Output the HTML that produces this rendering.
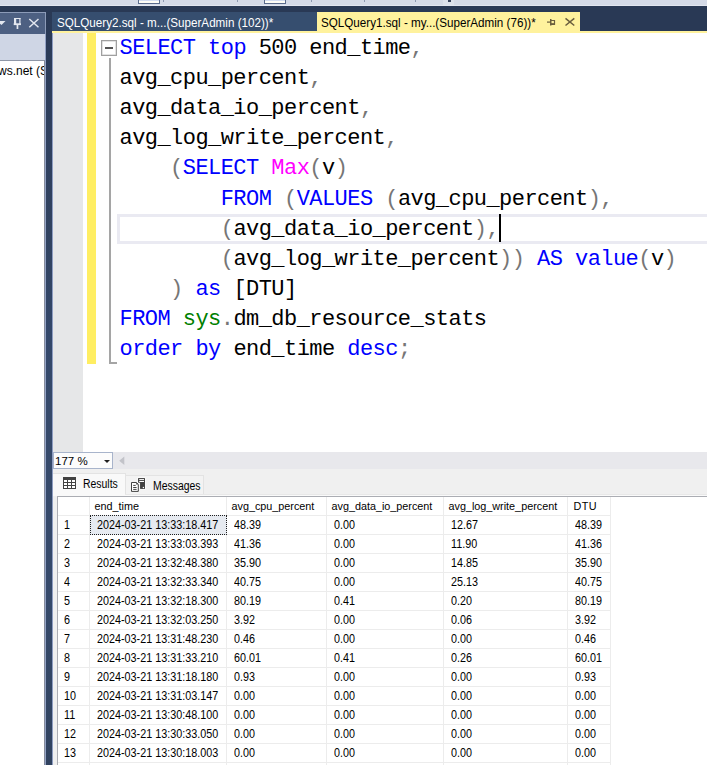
<!DOCTYPE html>
<html><head><meta charset="utf-8">
<style>
*{margin:0;padding:0;box-sizing:border-box}
html,body{width:707px;height:765px;overflow:hidden;background:#293955;position:relative;font-family:"Liberation Sans",sans-serif}
.a{position:absolute}
svg{position:absolute;overflow:visible}
#topbar{left:0;top:0;width:707px;height:5px;background:#D4DAE7}
#topline{left:0;top:5px;width:707px;height:1px;background:#E2E6F0}
.tb{position:absolute;top:0;height:4px;background:linear-gradient(#D3DCEF 0,#D3DCEF 1px,#FEFDF6 1px);border:1px solid #5A6B8C;border-top:none}
.tk{position:absolute;top:0;width:1px;height:2px;background:#8E9AB2}
#tw-title{left:0;top:12px;width:46px;height:22px;background:#4D6082;border-top:1px solid #8C9BB8;border-right:1px solid #8C9BB8}
#tw-tool{left:0;top:34px;width:46px;height:26px;background:#CFD6E5}
#tw-body{left:0;top:60px;width:45px;height:705px;background:#fff;border-top:1px solid #8E96A6;border-right:1px solid #868C9A}
#tw-edge{left:45px;top:34px;width:1px;height:731px;background:#94A3C6}
#vstrip{left:46px;top:6px;width:6px;height:759px;background:linear-gradient(to bottom,#293955 0px,#2F405F 140px,#304260 230px,#33476A 330px,#35496A 394px,#35496A 594px,#30425F 759px)}
#tw-text{left:0;top:61px;width:44px;height:20px;overflow:hidden;white-space:nowrap;font-size:12px;line-height:20px;color:#000}
#tab2{left:52px;top:12px;width:265px;height:19px;background:#364E6F}
#tab2 span,#tab1 span{position:absolute;left:5px;top:1.6px;font-size:12.6px;line-height:19px;white-space:nowrap;transform:scaleX(0.925);transform-origin:0 0}
#tab2 span{color:#fff}
#tab1{left:317px;top:12px;width:263px;height:19px;background:#FFF29D}
#tab1 span{left:4px;color:#000}
#tabline{left:52px;top:31px;width:655px;height:2px;background:#FFF29D}
#edge52{left:52px;top:33px;width:1px;height:732px;background:#8E9DC1}
#editor{left:53px;top:33px;width:654px;height:419px;background:#fff}
#margin{left:53px;top:33px;width:30px;height:419px;background:#E6E7E8}
#ybar{left:87px;top:33px;width:9px;height:331px;background:#FFEE62}
.cl{left:119.5px;font-family:"Liberation Mono",monospace;font-size:22px;line-height:30px;height:30px;letter-spacing:-0.55px;white-space:pre;color:#000}
.k{color:#0000FF}.g{color:#767676}.m{color:#FF00FF}.s{color:#008000}
#curline{left:117px;top:214px;width:600px;height:30px;border:3px solid #EAEAF2;border-right:none}
#caret{left:499px;top:214px;width:2px;height:28px;background:#000}
#obox{left:101px;top:40px;width:16px;height:16px;border:1px solid #A0A0A0;box-shadow:inset 0 0 0 0.5px #C8C8C8;background:#fff}
#obox i{position:absolute;left:3px;top:6px;width:8px;height:2px;background:#555}
#oline{left:109px;top:58px;width:2px;height:305px;background:#A5A5A5}
#otick{left:109px;top:362px;width:8px;height:2px;background:#A5A5A5}
#zbar{left:53px;top:452px;width:654px;height:17px;background:#E8E8EC}
#zcombo{left:53px;top:452px;width:60px;height:17px;background:#FCFCFC;border:1px solid #A8B4CB;font-size:11.5px;line-height:17px;padding-left:1px;color:#000}
#results{left:53px;top:469px;width:654px;height:296px;background:#F0F0F0}
#rtab{left:53px;top:473px;width:73px;height:23px;background:#F9F9F9;border:1px solid #E3E3E3;border-bottom:none;border-left:none}
#mtab{left:125px;top:475px;width:79px;height:21px;background:#F3F3F3;border:1px solid #E3E3E3;border-bottom:none}
.tabt{position:absolute;font-size:12px;line-height:14px;color:#000;white-space:nowrap;transform:scaleX(0.87);transform-origin:0 0}
#grid{left:57px;top:496px;width:650px;height:269px;background:#fff;border-top:1px solid #ABADB3;border-left:1px solid #ABADB3}
#tabbase{left:125px;top:494px;width:582px;height:2px;background:linear-gradient(#E8E8E8 0,#E8E8E8 1px,#FAFAFA 1px)}
.vl{position:absolute;top:497px;width:1px;height:268px;background:#ECECEC}
.hl{position:absolute;left:58px;width:553px;height:1px;background:#ECECEC}
.gt{position:absolute;font-size:10.8px;line-height:14px;white-space:nowrap;color:#000}
.gd{transform:scaleY(1.13);transform-origin:0 11px}
#sel{left:90px;top:515px;width:137px;height:20px;background:#E6EAF0;border:1px dotted #202020}
</style></head><body>
<div class="a" id="topbar"></div><div class="a" id="topline"></div>
<div class="tb" style="left:138px;width:22px"></div><div class="tb" style="left:264px;width:22px"></div><div class="tk" style="left:163px"></div><div class="tk" style="left:237px"></div><div class="tk" style="left:311px"></div><div class="tk" style="left:364px"></div><div class="tk" style="left:415px"></div><div class="a" style="left:443px;top:0;width:11px;height:5px;background:#DDE2EC"></div><div class="a" style="left:448px;top:0;width:3px;height:2px;background:#3A4660"></div>
<div class="a" id="vstrip"></div><div class="a" id="tw-title"></div><div class="a" id="tw-tool"></div><div class="a" id="tw-body"></div><div class="a" id="tw-edge"></div>
<div class="a" id="tw-text"><span style="position:relative;left:-2px">ws.net (SuperAdmin)</span></div>
<svg width="46" height="22" style="left:0;top:12px" viewBox="0 0 46 22"><path d="M-3 9 L5.5 9 L1.5 13 Z" fill="#E3E7EF"/><rect x="14" y="6" width="2.2" height="6" fill="#E3E7EF"/><rect x="19.3" y="6" width="1.2" height="6" fill="#E3E7EF"/><rect x="14" y="6" width="6.5" height="1" fill="#E3E7EF"/><rect x="13.7" y="11.3" width="7.3" height="1.8" fill="#E3E7EF"/><rect x="16.6" y="13" width="1.7" height="4" fill="#E3E7EF"/><path d="M29.3 7 L38.5 15.3 M38.5 7 L29.3 15.3" stroke="#E3E7EF" stroke-width="1.5"/></svg>
<div class="a" id="tab2"><span>SQLQuery2.sql - m...(SuperAdmin (102))*</span></div>
<div class="a" id="tab1"><span>SQLQuery1.sql - my...(SuperAdmin (76))*</span></div>
<svg width="40" height="19" style="left:540px;top:12px" viewBox="0 0 40 19"><rect x="7" y="9.5" width="4" height="1.2" fill="#6B5F3E"/><rect x="10" y="7" width="1.5" height="6.5" fill="#6B5F3E"/><path d="M11 8.5 H14.5 V12.3 H11" stroke="#6B5F3E" stroke-width="1.2" fill="none"/><rect x="11" y="11.2" width="4" height="1.8" fill="#6B5F3E"/><path d="M25.5 6.3 L34.3 13.5 M34.3 6.3 L25.5 13.5" stroke="#6B5F3E" stroke-width="1.5"/></svg>
<div class="a" id="tabline"></div>
<div class="a" id="edge52"></div><div class="a" id="editor"></div><div class="a" id="margin"></div><div class="a" id="ybar"></div>
<div class="a" id="curline"></div><div class="a" id="obox"><i></i></div><div class="a" id="oline"></div><div class="a" id="otick"></div>
<div class="a cl" style="top:34.0px"><span class="k">SELECT</span> <span class="k">top</span> 500 end_time<span class="g">,</span></div>
<div class="a cl" style="top:64.1px">avg_cpu_percent<span class="g">,</span></div>
<div class="a cl" style="top:94.2px">avg_data_io_percent<span class="g">,</span></div>
<div class="a cl" style="top:124.3px">avg_log_write_percent<span class="g">,</span></div>
<div class="a cl" style="top:154.4px">    <span class="g">(</span><span class="k">SELECT</span> <span class="m">Max</span><span class="g">(</span>v<span class="g">)</span></div>
<div class="a cl" style="top:184.5px">        <span class="k">FROM</span> <span class="g">(</span><span class="k">VALUES</span> <span class="g">(</span>avg_cpu_percent<span class="g">),</span></div>
<div class="a cl" style="top:214.6px">        <span class="g">(</span>avg_data_io_percent<span class="g">),</span></div>
<div class="a cl" style="top:244.7px">        <span class="g">(</span>avg_log_write_percent<span class="g">))</span> <span class="k">AS</span> <span class="k">value</span><span class="g">(</span>v<span class="g">)</span></div>
<div class="a cl" style="top:274.8px">    <span class="g">)</span> <span class="k">as</span> [DTU]</div>
<div class="a cl" style="top:304.9px"><span class="k">FROM</span> <span class="s">sys</span><span class="g">.</span>dm_db_resource_stats</div>
<div class="a cl" style="top:335.0px"><span class="k">order</span> <span class="k">by</span> end_time <span class="k">desc</span><span class="g">;</span></div>
<div class="a" id="caret"></div>
<div class="a" id="zbar"></div><div class="a" id="zcombo">177 %</div>
<svg width="30" height="17" style="left:100px;top:452px" viewBox="0 0 30 17"><path d="M4 8 H10 L7 11 Z" fill="#1E1E1E"/><path d="M24.3 4.5 V13 L19.2 8.7 Z" fill="#C2C3C9"/></svg>
<div class="a" id="results"></div><div class="a" id="rtab"></div><div class="a" id="mtab"></div>
<svg width="14" height="13" style="left:63px;top:477px" viewBox="0 0 14 13"><rect x="0" y="0" width="13" height="12" fill="#424242"/><rect x="1" y="3" width="3" height="2" fill="#fff"/><rect x="5" y="3" width="3" height="2" fill="#fff"/><rect x="9" y="3" width="3" height="2" fill="#fff"/><rect x="1" y="6" width="3" height="2" fill="#fff"/><rect x="5" y="6" width="3" height="2" fill="#fff"/><rect x="9" y="6" width="3" height="2" fill="#fff"/><rect x="1" y="9" width="3" height="2" fill="#fff"/><rect x="5" y="9" width="3" height="2" fill="#fff"/><rect x="9" y="9" width="3" height="2" fill="#fff"/></svg>
<div class="tabt" style="left:83px;top:477px">Results</div>
<svg width="16" height="16" style="left:130px;top:477px" viewBox="0 0 16 16"><path d="M1.5 5.5 H6.4 L8.3 7.4 V14.4 H1.5 Z" fill="#fff" stroke="#424242" stroke-width="1"/><path d="M6.2 5.5 V7.5 H8.3 Z" fill="#424242"/><path d="M3.2 8.4 H5.7 M3.2 10.5 H6.6 M3.2 12.4 H6.6" stroke="#424242" stroke-width="1"/><path d="M8.2 1.2 H14.9 V11.7 H10.2 V5.4 H8.2 Z" fill="#424242" stroke="#fff" stroke-width="1.4" paint-order="stroke"/><path d="M8.2 1.2 H14.9 V11.7 H10.2 V5.4 H8.2 Z" fill="#424242"/><rect x="9.2" y="2.1" width="4.8" height="1" fill="#fff"/><rect x="9.2" y="4.0" width="4.8" height="1" fill="#fff"/><circle cx="13.4" cy="10.5" r="0.7" fill="#fff"/></svg>
<div class="tabt" style="left:152.5px;top:479px">Messages</div>
<div class="a" id="tabbase"></div><div class="a" id="grid"></div>
<div class="vl" style="left:89px"></div>
<div class="vl" style="left:226px"></div>
<div class="vl" style="left:326px"></div>
<div class="vl" style="left:443px"></div>
<div class="vl" style="left:567px"></div>
<div class="vl" style="left:610px"></div>
<div class="hl" style="top:515px"></div>
<div class="hl" style="top:534px"></div>
<div class="hl" style="top:553px"></div>
<div class="hl" style="top:572px"></div>
<div class="hl" style="top:591px"></div>
<div class="hl" style="top:610px"></div>
<div class="hl" style="top:629px"></div>
<div class="hl" style="top:648px"></div>
<div class="hl" style="top:667px"></div>
<div class="hl" style="top:686px"></div>
<div class="hl" style="top:705px"></div>
<div class="hl" style="top:724px"></div>
<div class="hl" style="top:743px"></div>
<div class="hl" style="top:762px"></div>
<div class="a" id="sel"></div>
<div class="gt" style="left:94.5px;top:499px">end_time</div>
<div class="gt" style="left:231.5px;top:499px">avg_cpu_percent</div>
<div class="gt" style="left:331.5px;top:499px">avg_data_io_percent</div>
<div class="gt" style="left:448.5px;top:499px">avg_log_write_percent</div>
<div class="gt" style="left:573.5px;top:499px;letter-spacing:0.4px">DTU</div>
<div class="gt gd" style="left:64px;top:518px">1</div>
<div class="gt gd" style="left:97px;top:518px">2024-03-21 13:33:18.417</div>
<div class="gt gd" style="left:234px;top:518px">48.39</div>
<div class="gt gd" style="left:334px;top:518px">0.00</div>
<div class="gt gd" style="left:451px;top:518px">12.67</div>
<div class="gt gd" style="left:575px;top:518px">48.39</div>
<div class="gt gd" style="left:64px;top:537px">2</div>
<div class="gt gd" style="left:97px;top:537px">2024-03-21 13:33:03.393</div>
<div class="gt gd" style="left:234px;top:537px">41.36</div>
<div class="gt gd" style="left:334px;top:537px">0.00</div>
<div class="gt gd" style="left:451px;top:537px">11.90</div>
<div class="gt gd" style="left:575px;top:537px">41.36</div>
<div class="gt gd" style="left:64px;top:556px">3</div>
<div class="gt gd" style="left:97px;top:556px">2024-03-21 13:32:48.380</div>
<div class="gt gd" style="left:234px;top:556px">35.90</div>
<div class="gt gd" style="left:334px;top:556px">0.00</div>
<div class="gt gd" style="left:451px;top:556px">14.85</div>
<div class="gt gd" style="left:575px;top:556px">35.90</div>
<div class="gt gd" style="left:64px;top:575px">4</div>
<div class="gt gd" style="left:97px;top:575px">2024-03-21 13:32:33.340</div>
<div class="gt gd" style="left:234px;top:575px">40.75</div>
<div class="gt gd" style="left:334px;top:575px">0.00</div>
<div class="gt gd" style="left:451px;top:575px">25.13</div>
<div class="gt gd" style="left:575px;top:575px">40.75</div>
<div class="gt gd" style="left:64px;top:594px">5</div>
<div class="gt gd" style="left:97px;top:594px">2024-03-21 13:32:18.300</div>
<div class="gt gd" style="left:234px;top:594px">80.19</div>
<div class="gt gd" style="left:334px;top:594px">0.41</div>
<div class="gt gd" style="left:451px;top:594px">0.20</div>
<div class="gt gd" style="left:575px;top:594px">80.19</div>
<div class="gt gd" style="left:64px;top:613px">6</div>
<div class="gt gd" style="left:97px;top:613px">2024-03-21 13:32:03.250</div>
<div class="gt gd" style="left:234px;top:613px">3.92</div>
<div class="gt gd" style="left:334px;top:613px">0.00</div>
<div class="gt gd" style="left:451px;top:613px">0.06</div>
<div class="gt gd" style="left:575px;top:613px">3.92</div>
<div class="gt gd" style="left:64px;top:632px">7</div>
<div class="gt gd" style="left:97px;top:632px">2024-03-21 13:31:48.230</div>
<div class="gt gd" style="left:234px;top:632px">0.46</div>
<div class="gt gd" style="left:334px;top:632px">0.00</div>
<div class="gt gd" style="left:451px;top:632px">0.00</div>
<div class="gt gd" style="left:575px;top:632px">0.46</div>
<div class="gt gd" style="left:64px;top:651px">8</div>
<div class="gt gd" style="left:97px;top:651px">2024-03-21 13:31:33.210</div>
<div class="gt gd" style="left:234px;top:651px">60.01</div>
<div class="gt gd" style="left:334px;top:651px">0.41</div>
<div class="gt gd" style="left:451px;top:651px">0.26</div>
<div class="gt gd" style="left:575px;top:651px">60.01</div>
<div class="gt gd" style="left:64px;top:670px">9</div>
<div class="gt gd" style="left:97px;top:670px">2024-03-21 13:31:18.180</div>
<div class="gt gd" style="left:234px;top:670px">0.93</div>
<div class="gt gd" style="left:334px;top:670px">0.00</div>
<div class="gt gd" style="left:451px;top:670px">0.00</div>
<div class="gt gd" style="left:575px;top:670px">0.93</div>
<div class="gt gd" style="left:64px;top:689px">10</div>
<div class="gt gd" style="left:97px;top:689px">2024-03-21 13:31:03.147</div>
<div class="gt gd" style="left:234px;top:689px">0.00</div>
<div class="gt gd" style="left:334px;top:689px">0.00</div>
<div class="gt gd" style="left:451px;top:689px">0.00</div>
<div class="gt gd" style="left:575px;top:689px">0.00</div>
<div class="gt gd" style="left:64px;top:708px">11</div>
<div class="gt gd" style="left:97px;top:708px">2024-03-21 13:30:48.100</div>
<div class="gt gd" style="left:234px;top:708px">0.00</div>
<div class="gt gd" style="left:334px;top:708px">0.00</div>
<div class="gt gd" style="left:451px;top:708px">0.00</div>
<div class="gt gd" style="left:575px;top:708px">0.00</div>
<div class="gt gd" style="left:64px;top:727px">12</div>
<div class="gt gd" style="left:97px;top:727px">2024-03-21 13:30:33.050</div>
<div class="gt gd" style="left:234px;top:727px">0.00</div>
<div class="gt gd" style="left:334px;top:727px">0.00</div>
<div class="gt gd" style="left:451px;top:727px">0.00</div>
<div class="gt gd" style="left:575px;top:727px">0.00</div>
<div class="gt gd" style="left:64px;top:746px">13</div>
<div class="gt gd" style="left:97px;top:746px">2024-03-21 13:30:18.003</div>
<div class="gt gd" style="left:234px;top:746px">0.00</div>
<div class="gt gd" style="left:334px;top:746px">0.00</div>
<div class="gt gd" style="left:451px;top:746px">0.00</div>
<div class="gt gd" style="left:575px;top:746px">0.00</div>
</body></html>
